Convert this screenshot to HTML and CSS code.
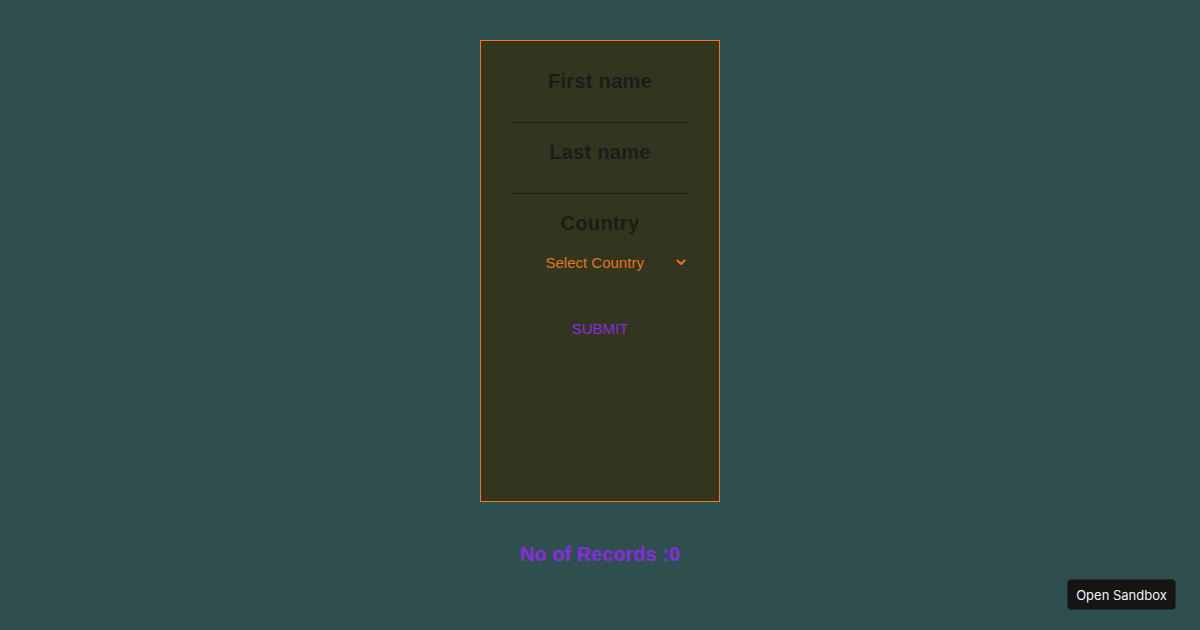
FILE: index.html
```html
<!DOCTYPE html>
<html>
<head>
<meta charset="utf-8">
<link rel="stylesheet" href="styles.css">
</head>
<body>
<div class="page">
  <form class="card">
    <div class="field">
      <label class="label">First name</label>
      <input class="input" type="text">
    </div>
    <div class="field">
      <label class="label">Last name</label>
      <input class="input" type="text">
    </div>
    <div class="field">
      <label class="label">Country</label>
      <div class="select-wrap">
        <select class="select">
          <option>Select Country</option>
        </select>
        <svg class="chev" width="10" height="7" viewBox="0 0 10 7"><path d="M1.5 1.5 L5 5 L8.5 1.5" fill="none" stroke="#e0761c" stroke-width="2" stroke-linecap="round" stroke-linejoin="round"/></svg>
      </div>
    </div>
    <button class="submit" type="button">SUBMIT</button>
  </form>
  <h2 class="records">No of Records :0</h2>
</div>
<button class="sandbox">Open Sandbox</button>
</body>
</html>
```
FILE: styles.css
```css
html, body {
  margin: 0;
  padding: 0;
  background: #2f4f4f;
  height: 100%;
}
body {
  font-family: "Liberation Sans", Arial, sans-serif;
  overflow: hidden;
}
.page {
  display: flex;
  flex-direction: column;
  align-items: center;
  padding-top: 40px;
}
.card {
  box-sizing: border-box;
  width: 240px;
  height: 462px;
  border: 1px solid #f07a1a;
  background: #34351e;
  display: flex;
  flex-direction: column;
  align-items: center;
  padding-top: 29px;
}
.field {
  display: flex;
  flex-direction: column;
  align-items: center;
  width: 177px;
  margin-bottom: 18px;
}
.label {
  display: block;
  font-size: 20px;
  line-height: 23px;
  height: 23px;
  font-weight: bold;
  letter-spacing: 0.3px;
  color: #1c1c18;
}
.input {
  box-sizing: border-box;
  width: 177px;
  height: 30px;
  border: none;
  border-bottom: 1px solid #1b1d10;
  background: transparent;
  outline: none;
  padding: 0;
}
.select-wrap {
  position: relative;
  width: 177px;
  height: 20px;
  margin-top: 18px;
}
.select {
  appearance: none;
  -webkit-appearance: none;
  width: 177px;
  height: 20px;
  border: none;
  background: transparent;
  color: #e0761c;
  font-family: "Liberation Sans", Arial, sans-serif;
  font-size: 15px;
  line-height: 20px;
  padding: 0 0 0 34px;
  margin: 0;
  outline: none;
}
.chev {
  position: absolute;
  right: 3px;
  top: 6px;
}
.submit {
  margin-top: 28px;
  border: none;
  background: transparent;
  color: #8a2be2;
  font-family: "Liberation Sans", Arial, sans-serif;
  font-size: 15px;
  line-height: 20px;
  padding: 0;
}
.records {
  margin: 41px 0 0 0;
  font-size: 20px;
  line-height: 23px;
  font-weight: bold;
  color: #8a2be2;
}
.sandbox {
  position: fixed;
  right: 24px;
  bottom: 20px;
  width: 109px;
  height: 31px;
  border: 1px solid #2a2a2a;
  border-radius: 4px;
  background: #151515;
  color: #f4f4f4;
  font-family: Inter, "Liberation Sans", sans-serif;
  font-size: 13px;
  padding: 0;
}
```
